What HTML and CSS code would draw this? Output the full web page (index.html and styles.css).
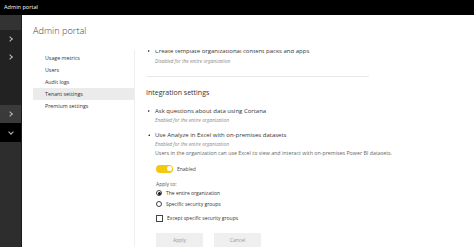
FILE: index.html
```html
<!DOCTYPE html>
<html>
<head>
<meta charset="utf-8">
<link rel="stylesheet" href="styles.css">
</head>
<body>
<header class="topbar">Admin portal</header>
<div class="app">
  <nav class="rail">
    <div class="rail-head"></div>
    <div class="rail-row"><span class="chev"></span></div>
    <div class="rail-row"><span class="chev"></span></div>
    <div class="rail-gap"></div>
    <div class="rail-row rail-row--light"><span class="chev"></span></div>
    <div class="rail-row rail-row--black"><span class="chev chev--down"></span></div>
    <div class="rail-rest"></div>
  </nav>
  <main class="main">
    <h1 class="title">Admin portal</h1>
    <div class="body">
      <ul class="menu">
        <li class="menu-item">Usage metrics</li>
        <li class="menu-item">Users</li>
        <li class="menu-item">Audit logs</li>
        <li class="menu-item menu-item--active">Tenant settings</li>
        <li class="menu-item">Premium settings</li>
      </ul>
      <section class="panel">
        <div class="scroll">
          <div class="setting">
            <div class="setting-name"><span class="tri"></span>Create template organizational content packs and apps</div>
            <div class="setting-sub setting-sub--top">Disabled for the entire organization</div>
          </div>
          <hr class="sep">
          <h2 class="group">Integration settings</h2>
          <div class="setting setting--first">
            <div class="setting-name"><span class="tri"></span>Ask questions about data using Cortana</div>
            <div class="setting-sub">Enabled for the entire organization</div>
          </div>
          <div class="setting setting--open">
            <div class="setting-name"><span class="tri tri--open"></span>Use Analyze in Excel with on-premises datasets</div>
            <div class="setting-sub">Enabled for the entire organization</div>
            <p class="desc">Users in the organization can use Excel to view and interact with on-premises Power BI datasets.</p>
            <div class="toggle-row"><span class="toggle"><span class="knob"></span></span><span>Enabled</span></div>
            <div class="apply-label">Apply to:</div>
            <div class="radio-row radio-row--first"><span class="radio radio--on"></span>The entire organization</div>
            <div class="radio-row"><span class="radio"></span>Specific security groups</div>
            <div class="check-row"><span class="check"></span>Except specific security groups</div>
            <div class="buttons">
              <span class="btn">Apply</span>
              <span class="btn">Cancel</span>
            </div>
          </div>
        </div>
      </section>
    </div>
  </main>
</div>
</body>
</html>
```
FILE: styles.css
```css
* { box-sizing: border-box; }
html, body { margin: 0; padding: 0; }
body {
  width: 474px;
  height: 247px;
  overflow: hidden;
  background: #fff;
  font-family: "Open Sans", "Noto Sans", sans-serif;
  color: #333;
}
.topbar {
  height: 15px;
  background: #000;
  color: #fff;
  font-size: 5.6px;
  line-height: 15px;
  padding-left: 4px;
}
.app {
  display: flex;
  height: 232px;
}
.rail {
  width: 22px;
  display: flex;
  flex-direction: column;
  background: #262626;
  border-right: 1px solid #1b1b1b;
}
.rail-head { height: 15px; background: #333; }
.rail-row {
  height: 18px;
  display: flex;
  align-items: center;
  justify-content: center;
  background: #222;
}
.rail-gap { height: 39px; background: #222; }
.rail-row--light { height: 18px; background: #3a3a3a; }
.rail-row--black { height: 19px; background: #000; }
.rail-rest { flex: 1; background: #2d2d2d; }
.chev {
  width: 4px;
  height: 4px;
  border-top: 1px solid #bbb;
  border-right: 1px solid #bbb;
  transform: rotate(45deg);
  margin-left: -2px;
}
.chev--down { transform: rotate(135deg); margin-left: 0; margin-top: -2px; }
.main {
  flex: 1;
  display: flex;
  flex-direction: column;
}
.title {
  margin: 0;
  height: 35px;
  padding: 10px 0 0 11px;
  font-size: 9.2px;
  font-weight: 300;
  color: #444;
  line-height: 12px;
}
.body {
  flex: 1;
  display: flex;
}
.menu {
  list-style: none;
  margin: 0;
  padding: 2px 0 0 11px;
  width: 112px;
  flex: none;
}
.menu-item {
  height: 12px;
  line-height: 12px;
  padding-left: 12px;
  font-size: 5.3px;
  color: #333;
}
.menu-item--active { background: #ebebeb; }
.panel {
  flex: 1;
  border-left: 1px solid #eee;
  overflow: hidden;
}
.scroll {
  margin-top: -3px;
  padding-left: 11px;
  width: 234px;
}
.setting-name {
  position: relative;
  padding-left: 9px;
  font-size: 6px;
  line-height: 8px;
  color: #333;
}
.setting-sub {
  margin-top: 1px;
  padding-left: 9px;
  font-size: 4.8px;
  font-style: italic;
  line-height: 8px;
  color: #888;
}
.setting-sub--top { margin-top: 2px; }
.tri {
  position: absolute;
  left: 2px;
  top: 2.5px;
  width: 0;
  height: 0;
  border-top: 1.5px solid transparent;
  border-bottom: 1.5px solid transparent;
  border-left: 2.5px solid #333;
}
.tri--open {
  border-top: 0;
  border-left: 2.5px solid transparent;
  border-bottom: 2.5px solid #333;
  top: 3px;
}
.sep {
  border: 0;
  border-top: 1px solid #e8e8e8;
  margin: 11px 0 0 0;
}
.group {
  margin: 11px 0 0 0;
  font-size: 7px;
  font-weight: 400;
  line-height: 10px;
  color: #333;
}
.setting--first { margin-top: 9px; }
.setting--open { margin-top: 7px; }
.desc {
  margin: 1.5px 0 0 9px;
  font-size: 5.3px;
  line-height: 7px;
  color: #666;
  white-space: nowrap;
}
.toggle-row {
  display: flex;
  align-items: center;
  gap: 4px;
  margin: 8px 0 0 10px;
  font-size: 5px;
  color: #444;
  height: 8px;
}
.toggle {
  width: 17px;
  height: 8px;
  border-radius: 4px;
  background: #f2c811;
  display: flex;
  justify-content: flex-end;
  align-items: center;
  padding-right: 1.5px;
}
.knob {
  width: 5px;
  height: 5px;
  border-radius: 50%;
  background: #fff;
}
.apply-label {
  margin: 8px 0 0 10px;
  font-size: 5px;
  line-height: 7px;
  color: #555;
}
.radio-row, .check-row {
  display: flex;
  align-items: center;
  gap: 4px;
  margin-left: 10px;
  font-size: 5px;
  color: #333;
  height: 8px;
}
.radio-row { margin-top: 3px; }
.radio-row--first { margin-top: 1.5px; }
.radio {
  width: 6px;
  height: 6px;
  border: 0.7px solid #444;
  border-radius: 50%;
  display: flex;
  align-items: center;
  justify-content: center;
}
.radio--on::after {
  content: "";
  width: 3px;
  height: 3px;
  border-radius: 50%;
  background: #111;
}
.check-row { margin-top: 6px; }
.check {
  width: 7px;
  height: 7px;
  border: 0.7px solid #444;
}
.buttons {
  display: flex;
  gap: 11px;
  margin: 11px 0 0 10px;
}
.btn {
  width: 47px;
  height: 14px;
  background: #efefef;
  font-size: 5px;
  color: #999;
  display: flex;
  align-items: center;
  justify-content: center;
}
```
